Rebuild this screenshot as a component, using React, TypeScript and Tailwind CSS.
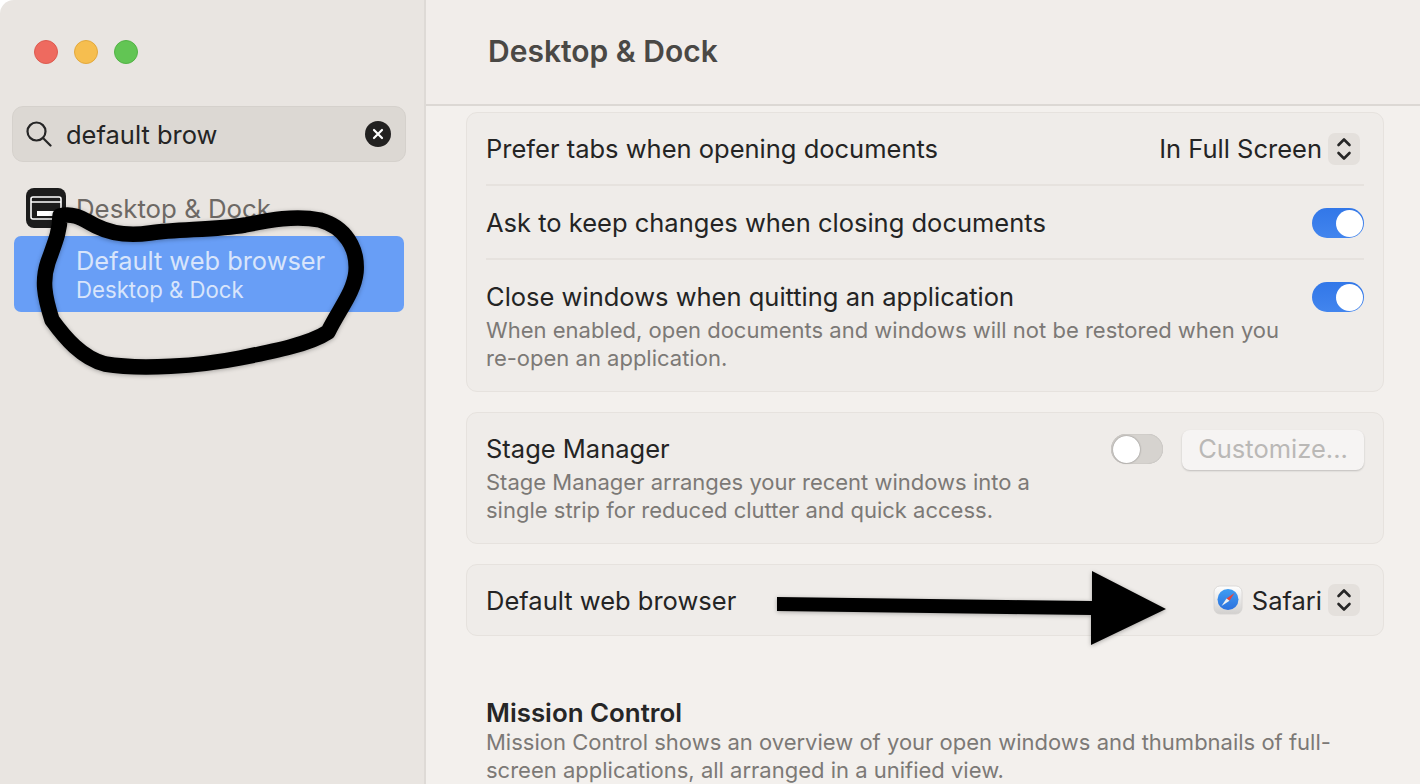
import React from "react";

function Stepper() {
  return (
    <div className="w-[32px] h-[32px] rounded-[7px] bg-[#e4e0dc] flex items-center justify-center">
      <svg width="16" height="26" viewBox="0 0 16 26" fill="none" stroke="#262626" strokeWidth="2.6" strokeLinecap="round" strokeLinejoin="round">
        <path d="M2.5 9 8 3.5 13.5 9" />
        <path d="M2.5 17 8 22.5 13.5 17" />
      </svg>
    </div>
  );
}

function Toggle({ on }: { on: boolean }) {
  return on ? (
    <div className="w-[52px] h-[30px] rounded-full bg-gradient-to-b from-[#3277e8] to-[#4285ee] flex items-center justify-end pr-[1.5px]">
      <div className="w-[27px] h-[27px] rounded-full bg-white" />
    </div>
  ) : (
    <div className="w-[52px] h-[30px] rounded-full bg-[#d6d3cf] flex items-center pl-[1.5px] shadow-[inset_0_0_1px_rgba(0,0,0,0.3)]">
      <div className="w-[27px] h-[27px] rounded-full bg-white shadow-[0_0_2px_rgba(0,0,0,0.45)]" />
    </div>
  );
}

const card = "ml-[40px] mr-[36px] rounded-[11px] border border-[#e6e2de] bg-[#efecE9] px-[19px]";
const title = "text-[25.5px] leading-[30px] text-[#242424]";
const sub = "text-[22px] leading-[28px] text-[#7c7976]";

export default function App() {
  return (
    <div
      className="relative w-[1420px] h-[784px] overflow-hidden bg-white"
      style={{ fontFamily: "Inter, 'Liberation Sans', sans-serif" }}
    >
      <div className="flex w-full h-full rounded-tl-[14px] overflow-hidden">
        {/* Sidebar */}
        <aside className="w-[426px] shrink-0 h-full bg-[#e9e5e1] border-r-2 border-[#dedad6] flex flex-col">
          <div className="flex gap-[16px] pl-[34px] pt-[40px]">
            <div className="w-[24px] h-[24px] rounded-full bg-[#ee6a5f] border border-[#dd5b50]" />
            <div className="w-[24px] h-[24px] rounded-full bg-[#f6be4f] border border-[#e3a93d]" />
            <div className="w-[24px] h-[24px] rounded-full bg-[#62c554] border border-[#53b346]" />
          </div>
          <div className="mt-[42px] ml-[12px] w-[394px] h-[56px] rounded-[11px] bg-[#dcd8d3] border border-[#d5d1cc] flex items-center pl-[13px] pr-[14px]">
            <svg width="26" height="26" viewBox="0 0 26 26" fill="none" stroke="#262626" strokeWidth="2.2" strokeLinecap="round">
              <circle cx="10.5" cy="10.5" r="9" />
              <path d="M17.5 17.5 24.5 24.5" />
            </svg>
            <span className="ml-[14px] flex-1 text-[25.5px] leading-[30px] pt-[2px] text-[#242424]">default brow</span>
            <div className="w-[26px] h-[26px] rounded-full bg-[#222120] flex items-center justify-center">
              <svg width="12" height="12" viewBox="0 0 12 12" stroke="#fff" strokeWidth="2.2" strokeLinecap="round">
                <path d="M2 2 10 10M10 2 2 10" />
              </svg>
            </div>
          </div>
          <div className="mt-[26px] ml-[26px] flex items-center h-[40px]">
            <div className="w-[40px] h-[40px] rounded-[8px] bg-[#1c1c1c] flex items-center justify-center">
              <svg width="32" height="24" viewBox="0 0 32 24" fill="none">
                <rect x="1" y="1" width="30" height="22" rx="2" stroke="#fff" strokeWidth="1.6" />
                <path d="M1 6H31" stroke="#fff" strokeWidth="1.6" />
                <rect x="7" y="15" width="18" height="5" fill="#fff" />
              </svg>
            </div>
            <span className="ml-[10px] text-[25.8px] leading-[30px] pt-[2px] text-[#6d6965]">Desktop &amp; Dock</span>
          </div>
          <div className="mt-[8px] ml-[14px] w-[390px] h-[76px] rounded-[7px] bg-[#689ef6] pl-[62px] pt-[8px]">
            <div className="text-[25.4px] leading-[34px] text-[#d8e5fb]">Default web browser</div>
            <div className="text-[22.2px] leading-[24px] text-[#d8e5fb]">Desktop &amp; Dock</div>
          </div>
        </aside>

        {/* Main */}
        <main className="flex-1 h-full bg-[#f3f0ed] flex flex-col">
          <header className="h-[106px] shrink-0 bg-[#f1edea] border-b-2 border-[#dcd8d4] pl-[62px] pt-[32px]">
            <h1 className="text-[30px] leading-[38px] font-semibold text-[#4a4845]">Desktop &amp; Dock</h1>
          </header>

          <section className={`${card} mt-[6px] h-[280px]`}>
            <div className="h-[73px] flex items-center justify-between border-b-2 border-[#e6e2de]">
              <span className={title}>Prefer tabs when opening documents</span>
              <div className="flex items-center gap-[6px] pr-[4px]">
                <span className={title}>In Full Screen</span>
                <Stepper />
              </div>
            </div>
            <div className="h-[74px] flex items-center justify-between border-b-2 border-[#e6e2de]">
              <span className={`${title} pt-[2px]`}>Ask to keep changes when closing documents</span>
              <div className="pt-[2px]">
                <Toggle on />
              </div>
            </div>
            <div className="pt-[22px] flex justify-between items-start">
              <div className="w-[805px]">
                <div className={title}>Close windows when quitting an application</div>
                <div className={`${sub} mt-[4px]`}>
                  When enabled, open documents and windows will not be restored when you re-open an application.
                </div>
              </div>
              <Toggle on />
            </div>
          </section>

          <section className={`${card} mt-[20px] h-[132px] pt-[21px] flex justify-between items-start`}>
            <div className="w-[580px]">
              <div className={title}>Stage Manager</div>
              <div className={`${sub} mt-[4px]`}>
                Stage Manager arranges your recent windows into a single strip for reduced clutter and quick access.
              </div>
            </div>
            <div className="flex items-start gap-[19px] -mt-[4px]">
              <div className="mt-[4px]">
                <Toggle on={false} />
              </div>
              <div className="w-[182px] h-[40px] pb-[1px] rounded-[8px] bg-[#f6f4f3] shadow-[0_1px_2px_rgba(0,0,0,0.2)] flex items-center justify-center text-[25.5px] text-[#bab8b6]">
                Customize...
              </div>
            </div>
          </section>

          <section className={`${card} mt-[20px] h-[72px] flex items-center justify-between`}>
            <span className={`${title} pt-[2px]`}>Default web browser</span>
            <div className="flex items-center pr-[4px]">
              <svg width="30" height="30" viewBox="0 0 30 30" className="mr-[9px]">
                <defs>
                  <linearGradient id="tile" x1="0" y1="0" x2="0" y2="1">
                    <stop offset="0" stopColor="#ffffff" />
                    <stop offset="1" stopColor="#d2d0ce" />
                  </linearGradient>
                  <linearGradient id="dial" x1="0" y1="0" x2="0" y2="1">
                    <stop offset="0" stopColor="#3f9df2" />
                    <stop offset="1" stopColor="#2c71de" />
                  </linearGradient>
                </defs>
                <rect x="1" y="1" width="28" height="28" rx="6" fill="url(#tile)" stroke="#d5d3d1" strokeWidth="0.8" />
                <circle cx="15" cy="14.5" r="10.5" fill="url(#dial)" />
                <path d="M21.5 8 13.5 13.5 16.5 15.8Z" fill="#e8443a" />
                <path d="M8.5 21 13.5 13.5 16.5 15.8Z" fill="#f1f1f1" />
              </svg>
              <span className={`${title} pt-[2px]`}>Safari</span>
              <div className="ml-[6px]">
                <Stepper />
              </div>
            </div>
          </section>

          <section className="mx-[60px] mt-[62px]">
            <div className="text-[25.9px] leading-[30px] font-semibold text-[#262626]">Mission Control</div>
            <div className={`${sub} w-[860px]`}>
              Mission Control shows an overview of your open windows and thumbnails of full-screen applications, all arranged in a unified view.
            </div>
          </section>
        </main>
      </div>

      {/* Hand-drawn annotations over the screenshot */}
      <svg
        className="absolute inset-0 pointer-events-none drop-shadow-[0_1px_2px_rgba(0,0,0,0.3)]"
        width="1420"
        height="784"
        viewBox="0 0 1420 784"
        fill="none"
      >
        <path
          d="M60 216C74 212 84 220 96 226C112 234 130 236 150 233C180 229 215 230 245 225C270 220 295 215 320 220C345 227 358 248 356 272C354 292 340 308 328 332C310 344 275 351 240 358C200 366 140 370 105 364C82 358 65 338 52 320C44 295 42 280 48 262C54 245 60 232 60 216Z"
          stroke="#000"
          strokeWidth="15.5"
          strokeLinejoin="round"
        />
        <path d="M777 597 1092 601V571L1166 609 1091 645V615L777 611Z" fill="#000" />
      </svg>
    </div>
  );
}
